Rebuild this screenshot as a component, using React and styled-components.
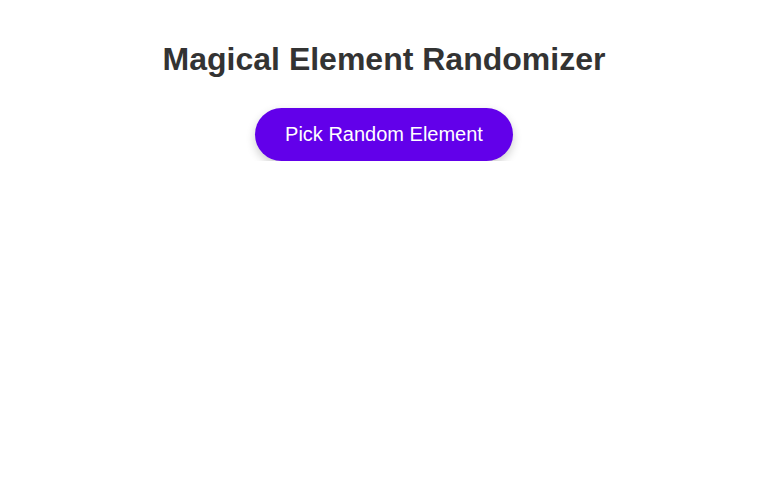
import React from "react";
import styled, { createGlobalStyle } from "styled-components";

const GlobalStyle = createGlobalStyle`
  html, body {
    margin: 0;
    padding: 0;
    background: #ffffff;
    font-family: "Liberation Sans", Arial, sans-serif;
  }
`;

const Page = styled.main`
  display: flex;
  flex-direction: column;
  align-items: center;
  padding-top: 41px;
`;

const Title = styled.h1`
  margin: 0 0 30px;
  font-size: 32px;
  line-height: 37px;
  font-weight: 700;
  color: #333333;
`;

const PickButton = styled.button`
  font-family: "Liberation Sans", Arial, sans-serif;
  font-size: 20px;
  line-height: 23px;
  padding: 15px 30px;
  border: none;
  border-radius: 27px;
  background: #6200ea;
  color: #ffffff;
  cursor: pointer;
  box-shadow: 0 4px 10px rgba(0, 0, 0, 0.2);
`;

export default function App() {
  return (
    <>
      <GlobalStyle />
      <Page>
        <Title>Magical Element Randomizer</Title>
        <PickButton type="button">Pick Random Element</PickButton>
      </Page>
    </>
  );
}
